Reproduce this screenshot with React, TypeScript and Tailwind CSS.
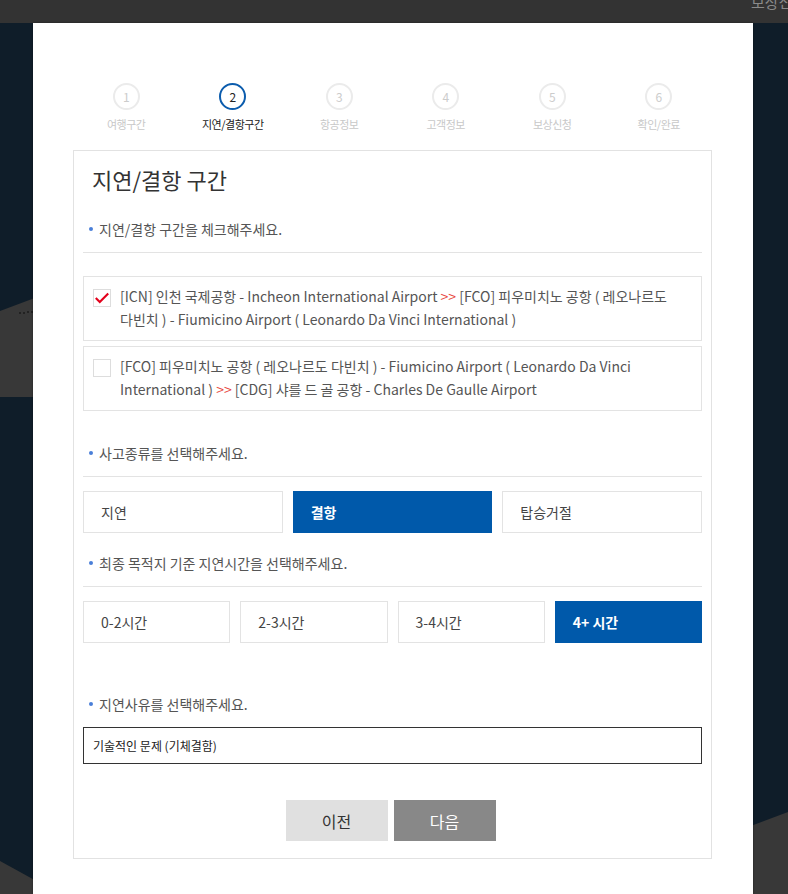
import { useState } from "react";

const steps = ["여행구간", "지연/결항구간", "항공정보", "고객정보", "보상신청", "확인/완료"];

const routes = [
  {
    id: "r1",
    from: "[ICN] 인천 국제공항 - Incheon International Airport",
    to: "[FCO] 피우미치노 공항 ( 레오나르도 다빈치 ) - Fiumicino Airport ( Leonardo Da Vinci International )",
  },
  {
    id: "r2",
    from: "[FCO] 피우미치노 공항 ( 레오나르도 다빈치 ) - Fiumicino Airport ( Leonardo Da Vinci International )",
    to: "[CDG] 샤를 드 골 공항 - Charles De Gaulle Airport",
  },
];

const incidentTypes = ["지연", "결항", "탑승거절"];
const delayTimes = ["0-2시간", "2-3시간", "3-4시간", "4+ 시간"];

function SectionLabel({ text, line = true }: { text: string; line?: boolean }) {
  return (
    <div className={line ? "border-b border-[#e3e3e3] pb-[13px]" : ""}>
      <div className="flex items-center gap-[6px] pl-[6px] text-[14px] leading-[20px] text-[#555]">
        <span className="h-[4px] w-[4px] rounded-full bg-[#4a7fd8]" />
        {text}
      </div>
    </div>
  );
}

export default function App() {
  const [checked, setChecked] = useState<Record<string, boolean>>({ r1: true, r2: false });
  const [incident, setIncident] = useState("결항");
  const [delay, setDelay] = useState("4+ 시간");

  return (
    <div
      className="relative h-[894px] w-[788px] overflow-hidden bg-[#0f1d29]"
      style={{ fontFamily: '"Noto Sans CJK KR", "Noto Sans", sans-serif' }}
    >
      {/* background shapes behind the dimmed page */}
      <svg className="absolute inset-0" width="788" height="894" viewBox="0 0 788 894">
        <polygon points="0,311 40,296 40,397 0,397" fill="#383838" />
        <polygon points="0,861 40,883 40,894 0,894" fill="#383838" />
        <polygon points="740,830 788,812 788,894 740,894" fill="#383838" />
        <g fill="#222">
          <rect x="19" y="312" width="2" height="2" />
          <rect x="23" y="312" width="2" height="2" />
          <rect x="27" y="311" width="2" height="2" />
          <rect x="31" y="311" width="2" height="2" />
        </g>
      </svg>

      {/* top bar */}
      <div className="relative flex h-[23px] overflow-hidden bg-[#333] pl-[751px]">
        <span className="-mt-[9px] whitespace-nowrap text-[15px] text-[#8a8a8a]">보상신청</span>
      </div>

      {/* modal */}
      <div className="relative ml-[33px] h-[871px] w-[720px] bg-white shadow-[0_0_2px_rgba(0,0,0,0.4)]">
        {/* stepper */}
        <div className="flex pl-[40px] pt-[60px]">
          {steps.map((s, i) => {
            const active = i === 1;
            return (
              <div key={s} className="flex w-[106.5px] flex-col items-center">
                <div
                  className={`flex h-[27px] w-[27px] items-center justify-center rounded-full border-2 text-[12px] ${
                    active ? "border-[#0b5cad] text-[#222]" : "border-[#ebebeb] text-[#ccc]"
                  }`}
                >
                  {i + 1}
                </div>
                <div className={`mt-[6px] text-[11px] leading-[16px] tracking-[-0.5px] ${active ? "text-[#222]" : "text-[#c8c8c8]"}`}>
                  {s}
                </div>
              </div>
            );
          })}
        </div>

        {/* content box */}
        <div className="ml-[40px] mt-[18px] h-[709px] w-[639px] border border-[#e2e2e2] px-[9px]">
          <h1 className="pl-[9px] pt-[12px] text-[22px] leading-[32px] text-[#333]">지연/결항 구간</h1>

          <div className="mt-[24px]">
            <SectionLabel text="지연/결항 구간을 체크해주세요." />
          </div>

          <div className="mt-[23px] flex flex-col gap-[5px]">
            {routes.map((r) => (
              <label
                key={r.id}
                className="flex h-[65px] cursor-pointer gap-[9px] border border-[#e3e3e3] pl-[9px] pr-[14px] pt-[8px]"
              >
                <input
                  type="checkbox"
                  className="hidden"
                  checked={checked[r.id]}
                  onChange={() => setChecked((p) => ({ ...p, [r.id]: !p[r.id] }))}
                />
                <span className="mt-[4px] flex h-[18px] w-[18px] shrink-0 items-center justify-center border border-[#ddd] bg-white">
                  {checked[r.id] && (
                    <svg width="18" height="18" viewBox="0 0 18 18">
                      <path d="M2 9 L6.5 13.5 L16 4" fill="none" stroke="#e3001b" strokeWidth="2.4" />
                    </svg>
                  )}
                </span>
                <span className="break-keep text-[14px] leading-[23px] text-[#555]">
                  {r.from} <span className="text-[#e8463c]">&gt;&gt;</span> {r.to}
                </span>
              </label>
            ))}
          </div>

          <div className="mt-[32px]">
            <SectionLabel text="사고종류를 선택해주세요." />
          </div>

          <div className="mt-[14px] grid grid-cols-3 gap-[10px]">
            {incidentTypes.map((t) => {
              const on = incident === t;
              return (
                <button
                  key={t}
                  onClick={() => setIncident(t)}
                  className={`h-[42px] border pl-[17px] text-left text-[14px] ${
                    on ? "border-[#0059aa] bg-[#0059aa] font-bold text-white" : "border-[#e3e3e3] bg-white text-[#444]"
                  }`}
                >
                  {t}
                </button>
              );
            })}
          </div>

          <div className="mt-[20px]">
            <SectionLabel text="최종 목적지 기준 지연시간을 선택해주세요." />
          </div>

          <div className="mt-[14px] grid grid-cols-4 gap-[10px]">
            {delayTimes.map((t) => {
              const on = delay === t;
              return (
                <button
                  key={t}
                  onClick={() => setDelay(t)}
                  className={`h-[42px] border pl-[17px] text-left text-[14px] ${
                    on ? "border-[#0059aa] bg-[#0059aa] font-bold text-white" : "border-[#e3e3e3] bg-white text-[#444]"
                  }`}
                >
                  {t}
                </button>
              );
            })}
          </div>

          <div className="mt-[51px]">
            <SectionLabel text="지연사유를 선택해주세요." line={false} />
          </div>

          <div className="mt-[13px] flex h-[37px] items-center border border-[#333] pl-[9px] text-[12px] text-[#222]">
            기술적인 문제 (기체결함)
          </div>

          <div className="mt-[36px] flex justify-center gap-[6px] pr-[4px]">
            <button className="h-[41px] w-[102px] bg-[#e0e0e0] text-[16px] text-[#333]">이전</button>
            <button className="h-[41px] w-[102px] bg-[#888] text-[16px] text-white">다음</button>
          </div>
        </div>
      </div>
    </div>
  );
}
